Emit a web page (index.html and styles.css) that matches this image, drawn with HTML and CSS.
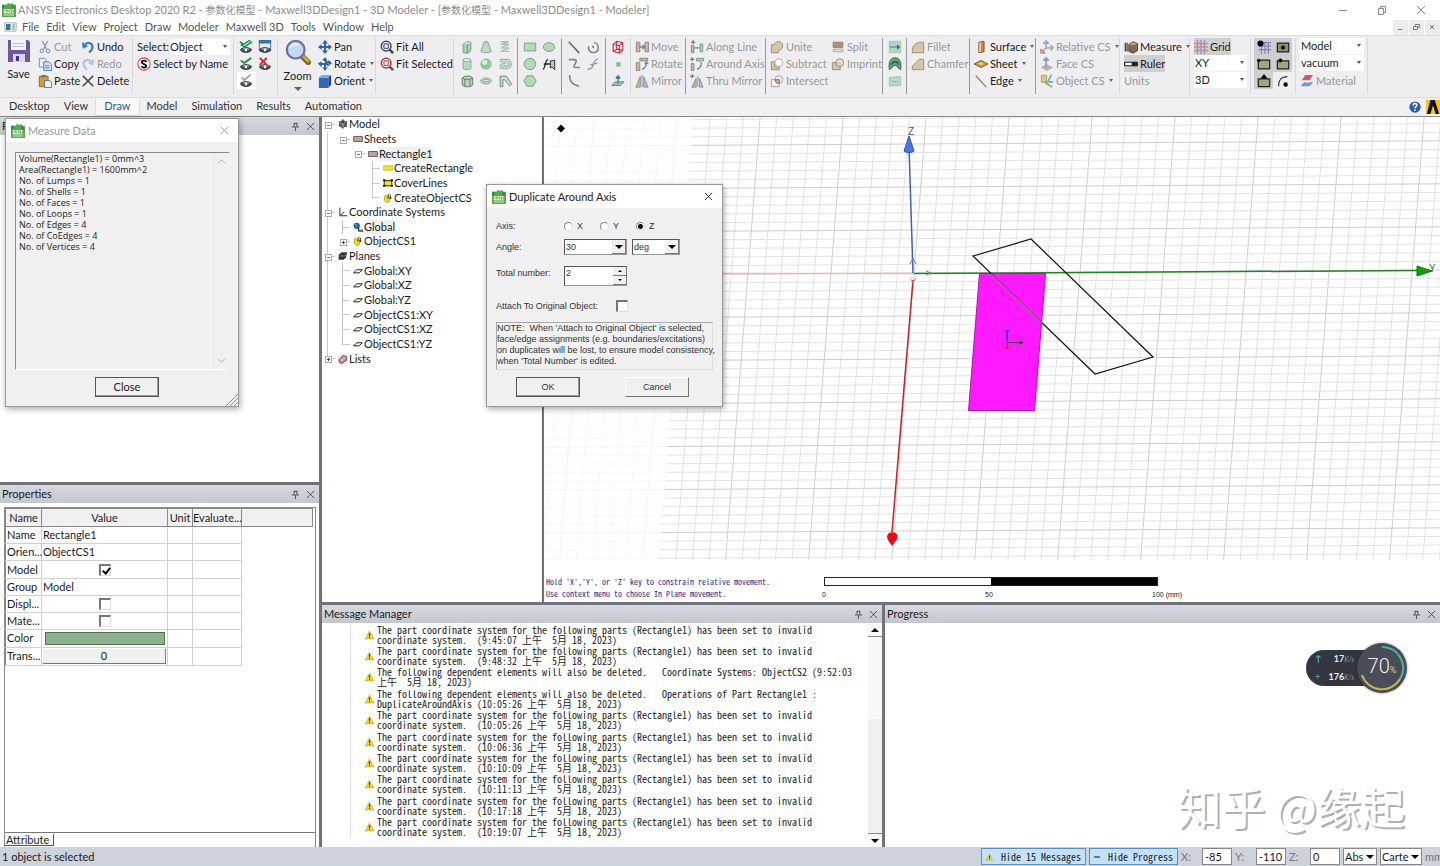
FILE: index.html
```html
<!DOCTYPE html>
<html lang="en">
<head>
  <meta charset="UTF-8">
  <title>ANSYS Electronics Desktop 2020 R2</title>
  <meta name="viewport" content="width=device-width, initial-scale=1.0">
  <link rel="stylesheet" href="styles.css">
</head>
<body>
  <!-- icon set -->
  <svg class="defs" aria-hidden="true">
    <symbol id="edt" viewBox="0 0 16 16"><path fill="#5aa552" d="M0 2h5l2-2 3 1 2-1 1 2h3v14H0z"/><path fill="#3f8a3c" d="M0 2h3v3l-3 2zM11 1l4 3v4l-3-2z"/><path fill="#8ccf7c" d="M2 11h12v4H2z"/><text x="2" y="11" class="edt-text">EDT</text></symbol>
    <symbol id="mdi" viewBox="0 0 16 16"><path fill="#fff" stroke="#8a9296" d="M.5 2.500h15v11H.5z"/><path fill="#2f7d86" d="M2 4h6v8H2z"/><path fill="#b9c4c8" d="M10 4h4v8h-4z"/></symbol>
    <symbol id="save" viewBox="0 0 24 24"><path fill="#6b58a5" d="M1 1h20l2 2v20H1z"/><path fill="#f4f3f8" d="M4 1h15v10H4z"/><path fill="#c3bedb" d="M6 4h11v1H6zM6 7h11v1H6z"/><path fill="#d8d5e6" d="M6 15h12v8H6z"/><path fill="#41347c" d="M9 17h3v5H9z"/></symbol>
    <symbol id="cut" viewBox="0 0 16 16"><path fill="none" stroke="#8fa3bd" stroke-width="1.600" d="M5 1l5 10M11 1L6 11"/><circle cx="4.500" cy="12.500" r="2" fill="none" stroke="#8fa3bd" stroke-width="1.500"/><circle cx="11.500" cy="12.500" r="2" fill="none" stroke="#8fa3bd" stroke-width="1.500"/></symbol>
    <symbol id="copy" viewBox="0 0 16 16"><path fill="#eaf2fc" stroke="#5f86bd" d="M1.500 1.500h6l2 2v8h-8z"/><path fill="#cfe0f6" stroke="#4a74b0" d="M6.500 5.500h6l3 3v7h-9z"/><path stroke="#4a74b0" d="M8 10h5M8 12.500h5"/></symbol>
    <symbol id="paste" viewBox="0 0 16 16"><path fill="#d69a3a" stroke="#8b6320" d="M1.500 2.500h10v12h-10z"/><path fill="#777" d="M4 1h5v3H4z"/><path fill="#e8f0fb" stroke="#49688f" d="M7.500 7.500h6l2 2v6h-8z"/></symbol>
    <symbol id="undo" viewBox="0 0 16 16"><path fill="none" stroke="#3f7cc4" stroke-width="2.600" d="M4 6c4-5 10-2 9 3-.5 3-2 4-4 5"/><path fill="#3f7cc4" d="M1 2l1 8 6-3z"/></symbol>
    <symbol id="redo" viewBox="0 0 16 16"><path fill="none" stroke="#b3c5dd" stroke-width="2.600" d="M12 6C8 1 2 4 3 9c.5 3 2 4 4 5"/><path fill="#b3c5dd" d="M15 2l-1 8-6-3z"/></symbol>
    <symbol id="delete" viewBox="0 0 16 16"><path fill="none" stroke="#4b4b4b" stroke-width="2" d="M2 2l12 12M14 2L2 14"/></symbol>
    <symbol id="byname" viewBox="0 0 16 16"><circle cx="8" cy="8" r="7" fill="#fff" stroke="#c9414b" stroke-width="1.200"/><path fill="none" stroke="#111" stroke-width="2.200" d="M11 5.500C9.500 3.500 5.500 3.800 5.500 6S10.600 8 10.600 10.300 6.500 12.600 5 10.600"/></symbol>
    <symbol id="eye" viewBox="0 0 16 16"><path fill="#3d4347" d="M1 11c3-4 11-4 14 0-3 5-11 5-14 0z"/><path fill="none" stroke="#c6cbcd" d="M4 11c2-2 6-2 8 0"/><circle cx="8" cy="11.500" r="1.600" fill="#fff"/></symbol>
    <symbol id="eye-tick" viewBox="0 0 16 16"><use href="#eye"/><path fill="none" stroke="#1f9a4b" stroke-width="2.200" d="M2 4l4 3 8-6"/></symbol>
    <symbol id="eye-ticks" viewBox="0 0 16 16"><use href="#eye"/><path fill="none" stroke="#1f9a4b" stroke-width="1.800" d="M1 2l4 3 8-5M2 5l4 3 9-6"/></symbol>
    <symbol id="eye-violet" viewBox="0 0 16 16"><use href="#eye"/><path fill="none" stroke="#b07fd0" stroke-width="1.800" d="M3 4l3 3 7-6"/></symbol>
    <symbol id="eye-win" viewBox="0 0 16 16"><path fill="#dfe9f5" stroke="#3f6fa8" d="M1.500.5h13v12h-13z"/><path fill="#3f6fa8" d="M1 0h14v4H1z"/><use href="#eye"/></symbol>
    <symbol id="eye-x" viewBox="0 0 16 16"><use href="#eye"/><path stroke="#d8262c" stroke-width="2.400" d="M2 1l8 8M10 1L2 9"/></symbol>
    <symbol id="zoom" viewBox="0 0 28 28"><path stroke="#7d6420" stroke-width="6" stroke-linecap="round" d="M18 18l7 7"/><path stroke="#c9a94b" stroke-width="3" stroke-linecap="round" d="M19 18l6 6"/><circle cx="11.500" cy="11.500" r="9.500" fill="#c3d8f5" stroke="#6a6f9c" stroke-width="2.400"/><path fill="#eef5fe" d="M5 10c1-5 7-7 11-3-4-1-8 0-11 3z"/></symbol>
    <symbol id="pan" viewBox="0 0 16 16"><path stroke="#2e63a8" stroke-width="2.400" d="M8 2v12M2 8h12"/><path fill="#2e63a8" d="M8 0l3.500 4h-7zM8 16l3.500-4h-7zM0 8l4-3.500v7zM16 8l-4-3.500v7z"/></symbol>
    <symbol id="rotate" viewBox="0 0 16 16"><path fill="none" stroke="#2e63a8" stroke-width="2.200" d="M9 2v4h5M1 8h9l2 2M8 14V9"/><path fill="#2e63a8" d="M5 3l4-3v6zM16 7l-4-4v7zM0 7l4-2v7zM8 16l3-4H5z"/></symbol>
    <symbol id="orient" viewBox="0 0 16 16"><path fill="#2f69b8" d="M1 4h11v12H1z"/><path fill="#79a9e2" d="M1 4l3-3h11l-3 3z"/><path fill="#1d4682" d="M12 4l3-3v11l-3 4z"/></symbol>
    <symbol id="fit" viewBox="0 0 16 16"><circle cx="7" cy="7" r="5.500" fill="#eef1fa" stroke="#3f4668" stroke-width="1.800"/><path stroke="#3f4668" stroke-width="3" d="M11 11l4 4"/><path fill="none" stroke="#333" d="M4.500 4.500h5v5h-5z"/></symbol>
    <symbol id="fitsel" viewBox="0 0 16 16"><circle cx="7" cy="7" r="5.500" fill="#fbeeee" stroke="#8f4747" stroke-width="1.800"/><path stroke="#6a5050" stroke-width="3" d="M11 11l4 4"/><path fill="none" stroke="#b52a35" d="M4.500 4.500h5v5h-5z"/></symbol>
    <symbol id="box" viewBox="0 0 16 16"><path fill="#a5d2ac" stroke="#7fa585" d="M3.500 4.500l5-3 4 1v10l-4 3-5-1z"/><path fill="#cfe8d2" d="M4 4.500l4.500-2.500 3.500 1L8 5z"/><path stroke="#6f9276" d="M8.500 5v10"/></symbol>
    <symbol id="cone" viewBox="0 0 16 16"><path fill="#c4d6cb" stroke="#8a9c90" d="M6 2h4l4 11c-3 2-9 2-12 0z"/><path fill="none" stroke="#a9b9ae" d="M6 3c1 1 3 1 4 0"/></symbol>
    <symbol id="helix" viewBox="0 0 16 16"><path fill="none" stroke="#a8c3b0" stroke-width="1.600" d="M3 2h8M11 2c2 1-6 2-7 3h8c1 1-7 2-8 4h8c1 1-7 2-8 4h9"/></symbol>
    <symbol id="cyl" viewBox="0 0 16 16"><path fill="#b5dcba" stroke="#83a98a" d="M3.500 3v10c2 2 7 2 9 0V3z"/><ellipse cx="8" cy="3.500" rx="4.500" ry="2" fill="#def0e0" stroke="#83a98a"/></symbol>
    <symbol id="sphere" viewBox="0 0 16 16"><circle cx="8" cy="8" r="6.500" fill="#93c49a"/><circle cx="6.500" cy="6" r="3" fill="#d5edd8"/></symbol>
    <symbol id="spiral" viewBox="0 0 16 16"><path fill="none" stroke="#8fa898" stroke-width="4" d="M2 4h8c5 0 5 8 0 8H6c-3 0-3-3 0-3h3"/><path fill="none" stroke="#c7e2cc" stroke-width="2" d="M2 4h8c5 0 5 8 0 8H6c-3 0-3-3 0-3h3"/></symbol>
    <symbol id="prism" viewBox="0 0 16 16"><path fill="#b5d6ba" stroke="#5f6f64" d="M2.500 4.500l3-2h6l3 2v8l-3 2h-6l-3-2z"/><path fill="none" stroke="#5f6f64" d="M2.500 4.500l3 1.500h6l3-1.500M5.500 6v8M11.500 6v8"/></symbol>
    <symbol id="torus" viewBox="0 0 16 16"><ellipse cx="8" cy="8" rx="6" ry="3.500" fill="#b9cdbf" stroke="#91a597"/><ellipse cx="8" cy="7.500" rx="3" ry="1.200" fill="#eef3ef" stroke="#91a597"/></symbol>
    <symbol id="bend" viewBox="0 0 16 16"><path fill="#cfe0d3" stroke="#66766b" d="M2.500 14.500v-12h7l6 9-2 2-6-7h-2v8z"/></symbol>
    <symbol id="rect" viewBox="0 0 16 16"><path fill="#b2dab8" stroke="#769a7c" d="M1.500 3.500h13v9h-13z"/></symbol>
    <symbol id="ellipse" viewBox="0 0 16 16"><ellipse cx="8" cy="8" rx="6.500" ry="5" fill="#b2dab8" stroke="#769a7c"/></symbol>
    <symbol id="circle" viewBox="0 0 16 16"><circle cx="8" cy="8" r="6.500" fill="#b2dab8" stroke="#769a7c"/></symbol>
    <symbol id="polygon" viewBox="0 0 16 16"><path fill="#b2dab8" stroke="#769a7c" d="M4.500 2h7L15 8l-3.500 6h-7L1 8z"/></symbol>
    <symbol id="eqn" viewBox="0 0 16 16"><path fill="#a9d2af" stroke="#222" d="M9.500 4.500l5-1v11l-3-3-2 1z"/><path fill="none" stroke="#222" stroke-width="1.500" d="M1 14c3 0 2-11 6-11M2 8h7"/></symbol>
    <symbol id="line" viewBox="0 0 16 16"><path stroke="#666b6e" stroke-width="1.800" d="M2 2l12 13"/></symbol>
    <symbol id="arc" viewBox="0 0 16 16"><path fill="none" stroke="#7d8386" stroke-width="1.700" d="M3 7c-2 9 11 10 11 2 0-4-2-6-5-6"/><circle cx="8" cy="8" r="1.300" fill="#7d8386"/></symbol>
    <symbol id="spline" viewBox="0 0 16 16"><path fill="none" stroke="#7d8386" stroke-width="1.800" d="M2 3h7c5 1-4 8 0 9h6"/></symbol>
    <symbol id="curve" viewBox="0 0 16 16"><path fill="none" stroke="#8d9396" stroke-width="1.500" d="M2 14c9 0 3-9 12-12M5 9l8-2"/></symbol>
    <symbol id="arc3" viewBox="0 0 16 16"><path fill="none" stroke="#7d8386" stroke-width="1.700" d="M3 1c0 8 3 11 11 13"/></symbol>
    <symbol id="redbox" viewBox="0 0 16 16"><path fill="#fdf0f0" stroke="#c9303a" stroke-width="1.300" d="M2.500 5l4-3.500 7 1.500v8.500L10 15l-7.500-2zM2.500 5l7 1.500L13.500 3M9.500 6.500V15M6.500 1.500v9l-4 2.500M6.500 10.500l7 1"/></symbol>
    <symbol id="point" viewBox="0 0 16 16"><path fill="#7cc286" d="M6 6h5v5H6z"/></symbol>
    <symbol id="plane" viewBox="0 0 16 16"><path fill="#a9c9af" stroke="#5d7363" d="M1 13l4-4h10l-4 4z"/><path stroke="#4a6fd0" stroke-width="1.500" d="M8 11V2M5.500 5L8 2l2.500 3"/></symbol>
    <symbol id="move" viewBox="0 0 16 16"><path fill="#c9b79a" stroke="#8a8276" d="M1.500 2.500h4v11h-4zM11.500 2.500h4v11h-4z"/><path stroke="#5f7fd0" stroke-width="1.500" d="M5 8h6M9 5.500L11 8 9 10.500"/></symbol>
    <symbol id="rot" viewBox="0 0 16 16"><path fill="#c9b79a" stroke="#8a8276" d="M1.500 6.500h4v9h-4zM5.500 1.500h9v3h-9z"/><path fill="none" stroke="#5f7fd0" stroke-width="1.500" d="M8 14c4-1 5-4 5-8M11 8l2-2 2 2"/></symbol>
    <symbol id="mirror" viewBox="0 0 16 16"><path fill="#c9b79a" stroke="#8a8276" d="M6 3v12H1z"/><path fill="#b7b9cd" stroke="#8a8ba6" d="M10 3v12h5z"/><path stroke="#7b82b8" d="M8 1v14"/></symbol>
    <symbol id="dupline" viewBox="0 0 16 16"><path fill="#c9b79a" stroke="#8a8276" d="M1.500 6.500h3v8h-3z"/><path fill="#a9d2af" stroke="#769a7c" d="M11.500 4.500h3v9h-3z"/><path stroke="#5f7fd0" stroke-width="1.500" d="M5 9h6"/><path stroke="#555" d="M1 2.500h5M3.500 0v5"/></symbol>
    <symbol id="duprot" viewBox="0 0 16 16"><path fill="#c9b79a" stroke="#8a8276" d="M1.500 7.500h3v8h-3z"/><path fill="#a9d2af" stroke="#769a7c" d="M7.500 1.500h8v3h-8z"/><path fill="none" stroke="#5f7fd0" stroke-width="1.500" d="M8 14c4-1 5-4 5-8"/><path stroke="#555" d="M0 2.500h5M2.500 0v5"/></symbol>
    <symbol id="dupmir" viewBox="0 0 16 16"><path fill="#c9b79a" stroke="#8a8276" d="M7 5v10H2z"/><path fill="#a9c9cd" stroke="#8a8ba6" d="M11 5v10h4z"/><path stroke="#7b82b8" d="M9 2v13"/><path stroke="#555" d="M0 2.500h5M2.500 0v5"/></symbol>
    <symbol id="unite" viewBox="0 0 16 16"><path fill="#d8c5a6" stroke="#93866f" d="M1.500 14.500v-9h3c1-5 10-5 10 1 0 3-2 5-4 5l-1 3z"/></symbol>
    <symbol id="subtract" viewBox="0 0 16 16"><path fill="#d8c5a6" stroke="#93866f" d="M1.500 14.500v-9h4v6h5v3z"/><circle cx="10" cy="6.500" r="4.500" fill="#fafafa" stroke="#aaa"/></symbol>
    <symbol id="intersect" viewBox="0 0 16 16"><path fill="#f4f4f4" stroke="#999" d="M1.500 6.500h9v8h-9z"/><circle cx="10" cy="6.500" r="4.500" fill="none" stroke="#999"/><path fill="#d8a58c" stroke="#a5694d" d="M6 6.500h4.500v4C8 11 6 9 6 6.500z"/></symbol>
    <symbol id="split" viewBox="0 0 16 16"><path fill="#b08f78" stroke="#8c8172" d="M2.500 2.500h11v6h-11z"/><path fill="#e6ded4" stroke="#aaa093" d="M2.500 10.500h11v3h-11z"/></symbol>
    <symbol id="imprint" viewBox="0 0 16 16"><path fill="#d8c5a6" stroke="#93866f" d="M1.500 6.500h9v8h-9z"/><circle cx="10" cy="6.500" r="4.500" fill="#e4d9c8" fill-opacity=".7" stroke="#93866f"/></symbol>
    <symbol id="sheet1" viewBox="0 0 16 16"><path fill="#a9d7cf" stroke="#b5c66a" d="M1.500 1.500h13v13h-13z"/><path stroke="#3f72d8" stroke-width="1.300" d="M2 8h11M10.500 5.500L13 8l-2.500 2.500"/></symbol>
    <symbol id="sheet2" viewBox="0 0 16 16"><path fill="#62aa6e" stroke="#2c5e3a" d="M1.500 14.500C0 2 5 1 8 1s8 1 6.500 13.500L11 12c0-3-6-3-6 0z"/><path fill="none" stroke="#1c3fae" stroke-width="1.500" d="M4 9c1-5 7-5 8 0"/></symbol>
    <symbol id="sheet3" viewBox="0 0 16 16"><path fill="#b1dcd2" stroke="#a8bfa0" d="M1.500 3.500c4 2 8-2 13 0v10c-5-2-9 2-13 0z"/><path stroke="#79a9b5" d="M4 8l8 1"/></symbol>
    <symbol id="fillet" viewBox="0 0 16 16"><path fill="#d8c5a6" stroke="#93866f" d="M1.500 14.500C1 6 5 2 14.500 2.500v12z"/></symbol>
    <symbol id="chamfer" viewBox="0 0 16 16"><path fill="#d8c5a6" stroke="#93866f" d="M1.500 14.500v-4l8-8h5v12z"/></symbol>
    <symbol id="surface" viewBox="0 0 16 16"><path fill="#c58b4c" stroke="#7b4f22" d="M5.500 2.500l6-1v12l-6 1z"/><path fill="#efd09a" d="M6 3l2-.5v11L6 14z"/></symbol>
    <symbol id="sheet" viewBox="0 0 16 16"><path fill="#caa04a" stroke="#6e5215" d="M0 8l8-4 8 4-8 4z"/><path fill="#f3dda0" d="M5 7.500l3-1.500 3 2-3 1z"/></symbol>
    <symbol id="edge" viewBox="0 0 16 16"><path stroke="#a87f5b" stroke-width="1.600" d="M2 2l12 13"/></symbol>
    <symbol id="cs" viewBox="0 0 16 16"><path fill="none" stroke="#8fb99a" stroke-width="2" d="M7 9h8M12 6l3 3-3 3"/><path stroke="#8fb2cf" stroke-width="2" d="M7 10V1M4 4l3-3 3 3"/><path stroke="#d6a1a1" stroke-width="2" d="M7 9l-5 5M1 10v5h5"/></symbol>
    <symbol id="facecs" viewBox="0 0 16 16"><path fill="#c9a9a2" d="M1 12l6-4 8 4-7 4z"/><path stroke="#7fa9c9" stroke-width="2" d="M7 11V1M4 4l3-3 3 3"/></symbol>
    <symbol id="objcs" viewBox="0 0 16 16"><path fill="#d8c878" stroke="#9aa060" d="M1.500 1.500h6v8h-6z"/><path stroke="#79b58a" stroke-width="2" d="M6 9h9M6 10l8 5"/><path stroke="#7fa9c9" stroke-width="2" d="M9 9l4-8"/></symbol>
    <symbol id="measure" viewBox="0 0 16 16"><path fill="#8b6a4a" stroke="#4b3623" d="M5.500 5l5-3 5 2v8l-5 3-5-2z"/><path fill="#c9a67d" d="M6 5l5-2.500L15 4l-4.500 2z"/><path stroke="#444" stroke-width="1.500" d="M1.500 3v10M3.500 3v10"/></symbol>
    <symbol id="ruler" viewBox="0 0 20 16"><path fill="#fff" stroke="#222" stroke-width="1.600" d="M1 5.500h18v5H1z"/><path fill="#222" d="M11 5h8v6h-8z"/></symbol>
    <symbol id="grid" viewBox="0 0 16 16"><path stroke="#8d93c4" stroke-width="1.500" d="M4 0v16M8 0v16M12 0v16"/><path stroke="#c78a93" stroke-width="1.500" d="M0 4h16M0 8h16M0 12h16"/></symbol>
    <symbol id="snapgrid" viewBox="0 0 16 16"><path stroke="#7d83b8" stroke-width="1.300" d="M5 4v12M9 2v14M13 2v14M2 7h14M2 11h14M7 3h9"/><circle cx="4" cy="4" r="3.500" fill="#000"/></symbol>
    <symbol id="snapc" viewBox="0 0 16 16"><path fill="#8d8f6b" stroke="#222" stroke-width="1.400" d="M1.500 3.500h13v10h-13z"/><circle cx="8" cy="8.500" r="2.300"/></symbol>
    <symbol id="snapv" viewBox="0 0 16 16"><path fill="#a3a57d" stroke="#222" stroke-width="1.400" d="M1.500 3.500h13v10h-13z"/><circle cx="2" cy="4" r="2"/></symbol>
    <symbol id="snape" viewBox="0 0 16 16"><path fill="#a3a57d" stroke="#222" stroke-width="1.400" d="M1.500 4.500h13v9h-13z"/><circle cx="5" cy="4" r="2.300"/></symbol>
    <symbol id="snapm" viewBox="0 0 16 16"><path fill="#a3a57d" stroke="#222" stroke-width="1.400" d="M1.500 5.500h13v9h-13z"/><path d="M8 0l4 5H4z"/></symbol>
    <symbol id="snapq" viewBox="0 0 16 16"><path fill="none" stroke="#222" stroke-width="1.300" d="M3 14C3 5 7 3 13 3"/><circle cx="11" cy="12" r="2.500"/></symbol>
    <symbol id="material" viewBox="0 0 16 16"><path fill="#7a93d6" d="M1 13l4-4h10l-4 5H2z"/><path fill="#efeff5" d="M2 9l4-3h9l-4 4z"/><path fill="#cf5a66" d="M2 7l4-6h9l-4 6z"/></symbol>
    <symbol id="help" viewBox="0 0 16 16"><circle cx="8" cy="8" r="7.500" fill="#2c5fa5"/><path fill="none" stroke="#fff" stroke-width="2" d="M5.500 6c0-4 5.500-3 5 0-.2 1.500-2.500 1.800-2.500 3.500M8 11v2"/></symbol>
    <symbol id="ansys" viewBox="0 0 16 16"><path fill="#f6c21c" d="M0 0h16v16H0z"/><path fill="#111" d="M5 0h5l5 16h-4L8 6 5 16H1z"/></symbol>
    <symbol id="warn" viewBox="0 0 16 16"><path fill="#f2dc22" stroke="#a89a10" d="M8 1l7.500 14H.5z"/><path stroke="#222" stroke-width="2" d="M8 5v5M8 11.500v2"/></symbol>
    <symbol id="pin" viewBox="0 0 10 10"><path fill="none" stroke="#444" d="M3.500 1v4M6.500 1v4M3 1.500h4M1 5.500h8M5 6v4"/></symbol>
    <symbol id="x" viewBox="0 0 10 10"><path fill="none" stroke="currentColor" d="M1 1l8 8M9 1L1 9"/></symbol>
    <symbol id="t-model" viewBox="0 0 16 16"><path fill="#555" d="M8 0l3 3 4 1-1 5 1 3-5 1-2 3-3-3-4-2 1-4-1-3 4-1z"/><path stroke="#eee" d="M4 6l4 2 4-3M8 8v5"/></symbol>
    <symbol id="t-sheet" viewBox="0 0 16 16"><path fill="#bda3a5" stroke="#6f5557" stroke-width="1.500" d="M1 4h14v8H1z"/></symbol>
    <symbol id="t-create" viewBox="0 0 16 16"><path fill="#f3e70d" stroke="#b5a600" d="M1 4.500h14v7H1z"/></symbol>
    <symbol id="t-cover" viewBox="0 0 16 16"><path fill="#f3e70d" stroke="#5a4a18" stroke-width="2" d="M2 4h12v8H2z"/><path fill="#222" d="M0 2h4v3H0zM12 2h4v3h-4zM0 11h4v3H0zM12 11h4v3h-4z"/></symbol>
    <symbol id="t-objcs" viewBox="0 0 16 16"><path fill="#f0e016" stroke="#8f8410" d="M2 5l4-2 5 3-1 8-5 1-3-3z"/><path stroke="#444" stroke-width="1.500" d="M7 8l7 0M7 8l3-7M12 3v7"/></symbol>
    <symbol id="t-cs" viewBox="0 0 16 16"><path fill="none" stroke="#333" stroke-width="1.600" d="M3 1v13h12M3 14l7-6"/></symbol>
    <symbol id="t-global" viewBox="0 0 16 16"><circle cx="6" cy="6" r="5" fill="#1f5fb8"/><path fill="#5cc26a" d="M3 3l4 1-2 3z"/><path fill="none" stroke="#222" stroke-width="2" d="M9 9v5h6"/><path fill="#d33" d="M12 12h4v4h-4z"/></symbol>
    <symbol id="t-planes" viewBox="0 0 16 16"><path fill="#333" d="M1 6l5-4h9l-2 8-4 4H1z"/><path fill="none" stroke="#bbb" d="M3 8h8l3-4"/></symbol>
    <symbol id="t-plane" viewBox="0 0 16 16"><path fill="#fff" stroke="#222" stroke-width="1.600" d="M1 11l5-5h9l-5 5z"/></symbol>
    <symbol id="t-lists" viewBox="0 0 16 16"><path fill="#c67a80" stroke="#6d2c31" d="M1 9l7-7 6 2v6l-7 5-5-1z"/><path stroke="#fff" d="M4 10l7-5M5 12l7-5"/></symbol>
  </svg>

  <header class="titlebar">
    <svg class="ico"><use href="#edt"/></svg>
    <h1>ANSYS Electronics Desktop 2020 R2 - <span lang="zh">参数化模型</span> - Maxwell3DDesign1 - 3D Modeler - [<span lang="zh">参数化模型</span> - Maxwell3DDesign1 - Modeler]</h1>
    <div class="win-buttons">
      <button aria-label="Minimize"><svg viewBox="0 0 10 10"><path d="M1 5.500h8"/></svg></button>
      <button aria-label="Restore"><svg viewBox="0 0 10 10"><path d="M1.500 3.500h5v6h-5zM3.500 3V1.500h5v6H7"/></svg></button>
      <button aria-label="Close window"><svg viewBox="0 0 10 10"><path d="M1 1l8 8M9 1L1 9"/></svg></button>
    </div>
  </header>

  <nav class="menubar">
    <svg class="mdi-ico"><use href="#mdi"/></svg>
    <a href="#">File</a><a href="#">Edit</a><a href="#">View</a><a href="#">Project</a><a href="#">Draw</a><a href="#">Modeler</a><a href="#">Maxwell 3D</a><a href="#">Tools</a><a href="#">Window</a><a href="#">Help</a>
    <div class="mdi-buttons">
      <button aria-label="Minimize document"><svg viewBox="0 0 10 10"><path d="M3 7.500h4"/></svg></button>
      <button aria-label="Restore document"><svg viewBox="0 0 10 10"><path d="M2.500 4.500h4v3h-4zM4.500 4V2.500h4v3H7"/></svg></button>
      <button aria-label="Close document"><svg viewBox="0 0 10 10"><path d="M3 3l4 4M7 3L3 7"/></svg></button>
    </div>
  </nav>

  <section class="ribbon">
    <div class="big"><button><svg class="save-ico"><use href="#save"/></svg>Save</button></div>
    <div class="col">
      <button class="off"><svg class="ico"><use href="#cut"/></svg>Cut</button>
      <button><svg class="ico"><use href="#copy"/></svg>Copy</button>
      <button><svg class="ico"><use href="#paste"/></svg>Paste</button>
    </div>
    <div class="col end">
      <button><svg class="ico"><use href="#undo"/></svg>Undo</button>
      <button class="off"><svg class="ico"><use href="#redo"/></svg>Redo</button>
      <button><svg class="ico"><use href="#delete"/></svg>Delete</button>
    </div>
    <div class="col end">
      <div class="row"><label for="select-mode">Select:</label><span class="sel grow"><select id="select-mode"><option>Object</option></select></span></div>
      <button><svg class="ico"><use href="#byname"/></svg>Select by Name</button>
    </div>
    <div class="icons two end">
      <button aria-label="Show selection in all views"><svg class="ico"><use href="#eye-ticks"/></svg></button>
      <button aria-label="Visibility dialog"><svg class="ico"><use href="#eye-win"/></svg></button>
      <button aria-label="Show selection"><svg class="ico"><use href="#eye-tick"/></svg></button>
      <button aria-label="Hide selection"><svg class="ico"><use href="#eye-x"/></svg></button>
      <button aria-label="Show only selection" class="lit"><svg class="ico"><use href="#eye-violet"/></svg></button>
    </div>
    <div class="big"><button><svg class="zoom-ico"><use href="#zoom"/></svg>Zoom<i class="arrow wide"></i></button></div>
    <div class="col end">
      <button><svg class="ico"><use href="#pan"/></svg>Pan</button>
      <button><svg class="ico"><use href="#rotate"/></svg>Rotate<i class="arrow"></i></button>
      <button><svg class="ico"><use href="#orient"/></svg>Orient<i class="arrow"></i></button>
    </div>
    <div class="col end">
      <button><svg class="ico"><use href="#fit"/></svg>Fit All</button>
      <button><svg class="ico"><use href="#fitsel"/></svg>Fit Selected</button>
    </div>
    <div class="icons three dark">
      <button aria-label="Box"><svg class="ico"><use href="#box"/></svg></button>
      <button aria-label="Cone"><svg class="ico"><use href="#cone"/></svg></button>
      <button aria-label="Helix"><svg class="ico"><use href="#helix"/></svg></button>
      <button aria-label="Cylinder"><svg class="ico"><use href="#cyl"/></svg></button>
      <button aria-label="Sphere"><svg class="ico"><use href="#sphere"/></svg></button>
      <button aria-label="Spiral"><svg class="ico"><use href="#spiral"/></svg></button>
      <button aria-label="Regular polyhedron"><svg class="ico"><use href="#prism"/></svg></button>
      <button aria-label="Torus"><svg class="ico"><use href="#torus"/></svg></button>
      <button aria-label="Bondwire"><svg class="ico"><use href="#bend"/></svg></button>
    </div>
    <div class="icons two dark">
      <button aria-label="Rectangle"><svg class="ico"><use href="#rect"/></svg></button>
      <button aria-label="Ellipse"><svg class="ico"><use href="#ellipse"/></svg></button>
      <button aria-label="Circle"><svg class="ico"><use href="#circle"/></svg></button>
      <button aria-label="Equation surface"><svg class="ico"><use href="#eqn"/></svg></button>
      <button aria-label="Regular polygon"><svg class="ico"><use href="#polygon"/></svg></button>
    </div>
    <div class="icons two dark">
      <button aria-label="Line"><svg class="ico"><use href="#line"/></svg></button>
      <button aria-label="Center arc"><svg class="ico"><use href="#arc"/></svg></button>
      <button aria-label="Spline"><svg class="ico"><use href="#spline"/></svg></button>
      <button aria-label="Equation curve"><svg class="ico"><use href="#curve"/></svg></button>
      <button aria-label="3 point arc"><svg class="ico"><use href="#arc3"/></svg></button>
    </div>
    <div class="icons one end">
      <button aria-label="Region"><svg class="ico"><use href="#redbox"/></svg></button>
      <button aria-label="Point"><svg class="ico"><use href="#point"/></svg></button>
      <button aria-label="Plane"><svg class="ico"><use href="#plane"/></svg></button>
    </div>
    <div class="col off dark">
      <button><svg class="ico"><use href="#move"/></svg>Move</button>
      <button><svg class="ico"><use href="#rot"/></svg>Rotate</button>
      <button><svg class="ico"><use href="#mirror"/></svg>Mirror</button>
    </div>
    <div class="col off dark">
      <button><svg class="ico"><use href="#dupline"/></svg>Along Line</button>
      <button><svg class="ico"><use href="#duprot"/></svg>Around Axis</button>
      <button><svg class="ico"><use href="#dupmir"/></svg>Thru Mirror</button>
    </div>
    <div class="col off">
      <button><svg class="ico"><use href="#unite"/></svg>Unite</button>
      <button><svg class="ico"><use href="#subtract"/></svg>Subtract</button>
      <button><svg class="ico"><use href="#intersect"/></svg>Intersect</button>
    </div>
    <div class="col off dark">
      <button><svg class="ico"><use href="#split"/></svg>Split</button>
      <button><svg class="ico"><use href="#imprint"/></svg>Imprint</button>
    </div>
    <div class="icons one dark">
      <button aria-label="Sweep along vector"><svg class="ico"><use href="#sheet1"/></svg></button>
      <button aria-label="Sweep around axis"><svg class="ico"><use href="#sheet2"/></svg></button>
      <button aria-label="Sweep along path"><svg class="ico"><use href="#sheet3"/></svg></button>
    </div>
    <div class="col off dark">
      <button><svg class="ico"><use href="#fillet"/></svg>Fillet</button>
      <button><svg class="ico"><use href="#chamfer"/></svg>Chamfer</button>
    </div>
    <div class="col dark">
      <button><svg class="ico"><use href="#surface"/></svg>Surface<i class="arrow"></i></button>
      <button><svg class="ico"><use href="#sheet"/></svg>Sheet<i class="arrow"></i></button>
      <button><svg class="ico"><use href="#edge"/></svg>Edge<i class="arrow"></i></button>
    </div>
    <div class="col off end">
      <button><svg class="ico"><use href="#cs"/></svg>Relative CS<i class="arrow"></i></button>
      <button><svg class="ico"><use href="#facecs"/></svg>Face CS</button>
      <button><svg class="ico"><use href="#objcs"/></svg>Object CS<i class="arrow"></i></button>
    </div>
    <div class="col end">
      <button><svg class="ico"><use href="#measure"/></svg>Measure<i class="arrow"></i></button>
      <button class="pressed"><svg class="ico"><use href="#ruler"/></svg>Ruler</button>
      <button class="off">Units</button>
    </div>
    <div class="col end">
      <button class="pressed"><svg class="ico"><use href="#grid"/></svg>Grid</button>
      <span class="sel"><select aria-label="Drawing plane"><option>XY</option></select></span>
      <span class="sel"><select aria-label="Movement mode"><option>3D</option></select></span>
    </div>
    <div class="icons two end">
      <button aria-label="Snap to grid" class="pressed"><svg class="ico"><use href="#snapgrid"/></svg></button>
      <button aria-label="Snap to face center" class="pressed"><svg class="ico"><use href="#snapc"/></svg></button>
      <button aria-label="Snap to vertex" class="pressed"><svg class="ico"><use href="#snapv"/></svg></button>
      <button aria-label="Snap to edge" class="pressed"><svg class="ico"><use href="#snape"/></svg></button>
      <button aria-label="Snap to edge center" class="pressed"><svg class="ico"><use href="#snapm"/></svg></button>
      <button aria-label="Snap to arc center"><svg class="ico"><use href="#snapq"/></svg></button>
    </div>
    <div class="col end">
      <span class="sel"><select aria-label="Model type"><option>Model</option></select></span>
      <span class="sel"><select aria-label="Material name"><option>vacuum</option></select></span>
      <button class="off"><svg class="ico"><use href="#material"/></svg>Material</button>
    </div>
  </section>

  <nav class="tabs">
    <a href="#">Desktop</a><a href="#">View</a><a href="#" class="active">Draw</a><a href="#">Model</a><a href="#">Simulation</a><a href="#">Results</a><a href="#">Automation</a>
    <div class="tabs-right">
      <button aria-label="Help"><svg class="small-ico"><use href="#help"/></svg></button>
      <button aria-label="ANSYS"><svg class="ico"><use href="#ansys"/></svg></button>
    </div>
  </nav>

  <main class="workspace">
    <aside class="side">
      <section class="panel project">
        <div class="panel-head"><h2>Project Manager</h2><button aria-label="Pin project manager"><svg><use href="#pin"/></svg></button><button aria-label="Close project manager"><svg><use href="#x"/></svg></button></div>
      </section>
      <section class="panel properties">
        <div class="panel-head"><h2>Properties</h2><button aria-label="Pin properties"><svg><use href="#pin"/></svg></button><button aria-label="Close properties"><svg><use href="#x"/></svg></button></div>
        <div class="prop-body">
          <table>
            <colgroup><col class="c-name"><col class="c-value"><col class="c-unit"><col class="c-eval"><col></colgroup>
            <thead><tr><th>Name</th><th>Value</th><th>Unit</th><th>Evaluate...</th><th></th></tr></thead>
            <tbody>
              <tr><td>Name</td><td>Rectangle1</td><td></td><td></td></tr>
              <tr><td>Orien...</td><td>ObjectCS1</td><td></td><td></td></tr>
              <tr><td>Model</td><td class="mid"><input type="checkbox" aria-label="Model" checked></td><td></td><td></td></tr>
              <tr><td>Group</td><td>Model</td><td></td><td></td></tr>
              <tr><td>Displ...</td><td class="mid"><input type="checkbox" aria-label="Display wireframe"></td><td></td><td></td></tr>
              <tr><td>Mate...</td><td class="mid"><input type="checkbox" aria-label="Material appearance"></td><td></td><td></td></tr>
              <tr><td>Color</td><td class="mid"><button class="swatch" aria-label="Color"></button></td><td></td><td></td></tr>
              <tr><td>Trans...</td><td class="mid"><button class="trans">0</button></td><td></td><td></td></tr>
            </tbody>
          </table>
          <div class="attr-bar"><button>Attribute</button></div>
        </div>
      </section>
    </aside>

    <div class="center">
      <div class="upper">
        <ul class="tree">
          <li><i class="g open"></i><svg><use href="#t-model"/></svg><span>Model</span></li>
          <li><i class="g v"></i><i class="g open"></i><svg><use href="#t-sheet"/></svg><span>Sheets</span></li>
          <li><i class="g v"></i><i class="g"></i><i class="g open"></i><svg><use href="#t-sheet"/></svg><span class="hl">Rectangle1</span></li>
          <li><i class="g v"></i><i class="g"></i><i class="g"></i><i class="g v b"></i><svg><use href="#t-create"/></svg><span>CreateRectangle</span></li>
          <li><i class="g v"></i><i class="g"></i><i class="g"></i><i class="g v b"></i><svg><use href="#t-cover"/></svg><span>CoverLines</span></li>
          <li><i class="g v"></i><i class="g"></i><i class="g"></i><i class="g l b"></i><svg><use href="#t-objcs"/></svg><span>CreateObjectCS</span></li>
          <li><i class="g v open"></i><svg><use href="#t-cs"/></svg><span>Coordinate Systems</span></li>
          <li><i class="g v"></i><i class="g v b"></i><svg><use href="#t-global"/></svg><span class="hl">Global</span></li>
          <li><i class="g v"></i><i class="g shut"></i><svg><use href="#t-objcs"/></svg><span>ObjectCS1</span></li>
          <li><i class="g v open"></i><svg><use href="#t-planes"/></svg><span>Planes</span></li>
          <li><i class="g v"></i><i class="g v b"></i><svg><use href="#t-plane"/></svg><span>Global:XY</span></li>
          <li><i class="g v"></i><i class="g v b"></i><svg><use href="#t-plane"/></svg><span>Global:XZ</span></li>
          <li><i class="g v"></i><i class="g v b"></i><svg><use href="#t-plane"/></svg><span>Global:YZ</span></li>
          <li><i class="g v"></i><i class="g v b"></i><svg><use href="#t-plane"/></svg><span>ObjectCS1:XY</span></li>
          <li><i class="g v"></i><i class="g v b"></i><svg><use href="#t-plane"/></svg><span>ObjectCS1:XZ</span></li>
          <li><i class="g v"></i><i class="g l b"></i><svg><use href="#t-plane"/></svg><span>ObjectCS1:YZ</span></li>
          <li><i class="g l shut"></i><svg><use href="#t-lists"/></svg><span>Lists</span></li>
        </ul>

        <div class="view">
          <svg class="scene">
            <g id="grid-lines"></g>
            <path d="M17 7.500l4 4-4 4-4-4z"/>
            <!-- global axes -->
            <path stroke="#f0b4b4" stroke-width="1.500" d="M0 156.500h370"/>
            <path stroke="#3d5fc4" stroke-width="1.500" d="M365 30l4 126"/>
            <path fill="#4a74ea" stroke="#2f52c0" d="M365 19l5 15c-2 2-8 2-10 0z"/>
            <path fill="none" stroke="#6a6fc0" d="M366 147l3-6 3 6"/>
            <path stroke="#1a8a1a" stroke-width="1.500" d="M370 156.500l504-3"/>
            <path fill="#0ca30c" stroke="#087808" d="M873 149l15 5-15 5z"/>
            <path fill="none" stroke="#4c9a4c" d="M382 154l5 2-5 2"/>
            <path stroke="#c8202a" stroke-width="1.500" d="M369 163l-21 252"/>
            <path fill="none" stroke="#d88" d="M366 161l3 5 3-5"/>
            <path fill="#f00612" d="M348 429l-4-6c-5-10 13-10 9-1zM348 422l5 7"/>
            <text x="364" y="18" class="axis z">Z</text>
            <text x="885" y="155" class="axis y">Y</text>
            <!-- selected sheet and its rotated copy -->
            <path fill="#ff19ff" stroke="#b011b0" d="M435.500 156.500h66l-11 137h-66z"/>
            <path fill="none" stroke="#111" stroke-width="1.200" d="M429 139l58-17 122 118-58 17z"/>
            <path stroke="#a56f9b" stroke-width="1.500" d="M447 157l51 49"/>
            <path stroke="#2a2ae0" stroke-width="1.500" d="M463 224v-11M461 214h4"/>
            <path stroke="#e0203a" stroke-width="1.500" d="M463 226v6M461 231h4"/>
            <path stroke="#444" d="M463 225.500h16M476 223.500l3 2-3 2"/>
          </svg>
          <div class="hints"><p>Hold 'X','Y', or 'Z' key to constrain relative movement.</p><p>Use context menu to choose In Plane movement.</p></div>
          <div class="scale">
            <div class="scale-bar"></div>
            <div class="scale-labels"><span>0</span><span>50</span><span>100 (mm)</span></div>
          </div>
        </div>
      </div>

      <div class="lower">
        <section class="panel messages">
          <div class="panel-head"><h2>Message Manager</h2><button aria-label="Pin messages"><svg><use href="#pin"/></svg></button><button aria-label="Close messages"><svg><use href="#x"/></svg></button></div>
          <div class="msg-body">
            <ul class="msg-list">
              <li><svg><use href="#warn"/></svg><p>The part coordinate system for the following parts (Rectangle1) has been set to invalid<br>coordinate system.&nbsp; (9:45:07 上午&nbsp; 5月 18, 2023)</p></li>
              <li><svg><use href="#warn"/></svg><p>The part coordinate system for the following parts (Rectangle1) has been set to invalid<br>coordinate system.&nbsp; (9:48:32 上午&nbsp; 5月 18, 2023)</p></li>
              <li><svg><use href="#warn"/></svg><p>The following dependent elements will also be deleted.&nbsp;&nbsp; Coordinate Systems: ObjectCS2 (9:52:03<br>上午&nbsp; 5月 18, 2023)</p></li>
              <li><svg><use href="#warn"/></svg><p>The following dependent elements will also be deleted.&nbsp;&nbsp; Operations of Part Rectangle1 :<br>DuplicateAroundAxis (10:05:26 上午&nbsp; 5月 18, 2023)</p></li>
              <li><svg><use href="#warn"/></svg><p>The part coordinate system for the following parts (Rectangle1) has been set to invalid<br>coordinate system.&nbsp; (10:05:26 上午&nbsp; 5月 18, 2023)</p></li>
              <li><svg><use href="#warn"/></svg><p>The part coordinate system for the following parts (Rectangle1) has been set to invalid<br>coordinate system.&nbsp; (10:06:36 上午&nbsp; 5月 18, 2023)</p></li>
              <li><svg><use href="#warn"/></svg><p>The part coordinate system for the following parts (Rectangle1) has been set to invalid<br>coordinate system.&nbsp; (10:10:09 上午&nbsp; 5月 18, 2023)</p></li>
              <li><svg><use href="#warn"/></svg><p>The part coordinate system for the following parts (Rectangle1) has been set to invalid<br>coordinate system.&nbsp; (10:11:13 上午&nbsp; 5月 18, 2023)</p></li>
              <li><svg><use href="#warn"/></svg><p>The part coordinate system for the following parts (Rectangle1) has been set to invalid<br>coordinate system.&nbsp; (10:17:18 上午&nbsp; 5月 18, 2023)</p></li>
              <li><svg><use href="#warn"/></svg><p>The part coordinate system for the following parts (Rectangle1) has been set to invalid<br>coordinate system.&nbsp; (10:19:07 上午&nbsp; 5月 18, 2023)</p></li>
            </ul>
            <div class="scrollbar"><button aria-label="Scroll up"><i class="tri up"></i></button><div class="thumb"></div><button aria-label="Scroll down"><i class="tri"></i></button></div>
          </div>
        </section>
        <section class="panel progress">
          <div class="panel-head"><h2>Progress</h2><button aria-label="Pin progress"><svg><use href="#pin"/></svg></button><button aria-label="Close progress"><svg><use href="#x"/></svg></button></div>
        </section>
      </div>
    </div>

    <section class="dialog measure">
      <header><svg class="ico"><use href="#edt"/></svg><h2>Measure Data</h2><button aria-label="Close measure data"><svg><use href="#x"/></svg></button></header>
      <div class="measure-box">
        <textarea aria-label="Measure results" readonly>Volume(Rectangle1) = 0mm^3
Area(Rectangle1) = 1600mm^2
No. of Lumps = 1
No. of Shells = 1
No. of Faces = 1
No. of Loops = 1
No. of Edges = 4
No. of CoEdges = 4
No. of Vertices = 4</textarea>
        <div class="chevrons"><svg viewBox="0 0 10 10"><path d="M1 7l4-4 4 4"/></svg><svg viewBox="0 0 10 10"><path d="M1 3l4 4 4-4"/></svg></div>
      </div>
      <footer><button class="btn default">Close</button></footer>
      <svg class="grip" viewBox="0 0 12 12"><path d="M0 12L12 0M4 12l8-8M8 12l4-4"/></svg>
    </section>

    <section class="dialog duplicate">
      <header><svg class="ico"><use href="#edt"/></svg><h2>Duplicate Around Axis</h2><button aria-label="Close dialog"><svg><use href="#x"/></svg></button></header>
      <form>
        <div class="field axis-row"><span class="name">Axis:</span><label><input type="radio" name="axis">X</label><label><input type="radio" name="axis">Y</label><label><input type="radio" name="axis" checked>Z</label></div>
        <div class="field angle-row"><label class="name" for="angle">Angle:</label><span class="combo"><input id="angle" type="text" value="30"><button type="button" aria-label="Angle list"><i class="tri"></i></button></span><span class="combo unit"><select aria-label="Angle unit"><option>deg</option></select><span class="drop"><i class="tri"></i></span></span></div>
        <div class="field total-row"><label class="name" for="total">Total number:</label><span class="combo spin"><input id="total" type="text" value="2"><span class="spin-buttons"><button type="button" aria-label="Increase"><i class="tri up"></i></button><button type="button" aria-label="Decrease"><i class="tri"></i></button></span></span></div>
        <div class="field attach-row"><label for="attach">Attach To Original Object:</label><input id="attach" type="checkbox"></div>
        <p class="note">NOTE:&nbsp; When 'Attach to Original Object' is selected,<br>face/edge assignments (e.g. boundaries/excitations)<br>on duplicates will be lost, to ensure model consistency,<br>when 'Total Number' is edited.</p>
        <div class="actions"><button type="button" class="btn default">OK</button><button type="button" class="btn">Cancel</button></div>
      </form>
    </section>

    <div class="netspeed">
      <div class="rates"><p><i class="up">↑</i><b>17</b><em>K/s</em></p><p><i class="down">+</i><b>176</b><em>K/s</em></p></div>
      <div class="load"><svg viewBox="0 0 50 50"><path stroke="#45b8a8" d="M25 4a21 21 0 0 1 18 32"/><path stroke="#c9b84c" d="M43 36a21 21 0 0 1-38-4"/></svg><span>70<small>%</small></span></div>
    </div>
    <p class="watermark">知乎 @缘起</p>
  </main>

  <footer class="statusbar">
    <span class="state">1 object is selected</span>
    <button class="toggle"><svg><use href="#warn"/></svg>Hide 15 Messages</button>
    <button class="toggle"><i class="dash"></i>Hide Progress</button>
    <label for="sx">X:</label><input id="sx" type="text" value="-85">
    <label for="sy">Y:</label><input id="sy" type="text" value="-110">
    <label for="sz">Z:</label><input id="sz" type="text" value="0">
    <span class="sel old abs"><select aria-label="Coordinate mode"><option>Abs</option></select></span>
    <span class="sel old carte"><select aria-label="Coordinate type"><option>Carte</option></select></span>
    <span class="units">mm</span>
  </footer>

  <script src="grid.js"></script>
</body>
</html>
```

FILE: styles.css
```css
* {
  box-sizing: border-box;
}
body {
  margin: 0;
  height: 100vh;
  display: flex;
  flex-direction: column;
  overflow: hidden;
  background: #fff;
  color: #1b1b1b;
  font: 11px/14px Lato, "Noto Sans CJK SC", sans-serif;
}
h1, h2, p, ul {
  margin: 0;
  padding: 0;
  font-size: 11px;
  font-weight: 400;
  list-style: none;
}
a {
  color: inherit;
  text-decoration: none;
}
button, input, select, textarea {
  font: inherit;
  color: inherit;
  margin: 0;
  padding: 0;
  border: 0;
  border-radius: 0;
  background: none;
  outline: none;
}
select {
  appearance: none;
  width: 100%;
  height: 100%;
}
button svg {
  display: block;
}
.defs {
  position: absolute;
  width: 0;
  height: 0;
}
.ico {
  width: 14px;
  height: 14px;
  flex: none;
}
.edt-text {
  font: bold 6px "Liberation Sans", sans-serif;
  fill: #fff;
}

/* title and menu */
.titlebar {
  display: flex;
  align-items: center;
  height: 19px;
  padding-left: 2px;
  gap: 2px;
  color: #8c8c8c;
}
.titlebar h1 {
  flex: 1;
  white-space: nowrap;
}
.titlebar span {
  font-size: 10px;
}
.win-buttons {
  display: flex;
}
.win-buttons button {
  width: 39px;
  height: 18px;
  display: flex;
  align-items: center;
  justify-content: center;
}
.win-buttons svg {
  width: 10px;
  height: 10px;
  fill: none;
  stroke: #8a8a8a;
}
.menubar {
  display: flex;
  align-items: center;
  height: 16px;
  gap: 7px;
  padding-left: 4px;
  color: #555;
}
.mdi-ico {
  width: 13px;
  height: 12px;
  margin-right: -2px;
}
.mdi-buttons {
  display: flex;
  gap: 1px;
  margin-left: auto;
}
.mdi-buttons button {
  width: 15px;
  height: 15px;
  padding: 2px;
  background: #ebebeb;
}
.mdi-buttons svg {
  width: 10px;
  height: 10px;
  fill: none;
  stroke: #777;
}

/* ribbon */
.ribbon {
  display: grid;
  grid-template-columns: 34px 43px 56px 101px 44px 36px 62px 78px 64px 44px 44px 25px 55px 80px 61px 56px 24px 63px 66px 84px 70px 61px 45px 72px 1fr;
  height: 63px;
  padding: 2px 0 3px;
  background: #eeeef1;
  border-top: 1px solid #dcdce0;
  border-bottom: 1px solid #dcdce0;
}
.ribbon > div {
  border-right: 1px solid transparent;
}
.ribbon > .end {
  border-right-color: #d8d8dc;
}
.ribbon > .dark {
  border-right-color: #9a9a9e;
}
.ribbon button {
  display: flex;
  align-items: center;
  gap: 2px;
  height: 17px;
  white-space: nowrap;
}
.ribbon .col {
  display: flex;
  flex-direction: column;
  align-items: flex-start;
  padding-left: 4px;
}
.ribbon .col.off, .ribbon .off {
  color: #989898;
}
.ribbon .row {
  display: flex;
  align-items: center;
  align-self: stretch;
  height: 17px;
  gap: 1px;
  padding-right: 3px;
}
.ribbon .big button {
  flex-direction: column;
  width: 100%;
  height: 56px;
  gap: 4px;
  padding: 1px 0 0 4px;
}
.save-ico {
  width: 24px;
  height: 24px;
}
.zoom-ico {
  width: 26px;
  height: 26px;
}
.icons {
  display: grid;
  grid-auto-rows: 17px;
  justify-content: center;
}
.icons.one {
  grid-template-columns: 19px;
}
.icons.two {
  grid-template-columns: 19px 19px;
}
.icons.three {
  grid-template-columns: 19px 19px 19px;
}
.icons button {
  justify-content: center;
}
.ribbon .pressed {
  background: #cfcfd1;
}
.ribbon .lit {
  background: #fff;
}
.arrow {
  width: 0;
  height: 0;
  margin-left: 2px;
  border: 2px solid transparent;
  border-top: 3px solid #666;
  border-bottom: 0;
}
.arrow.wide {
  margin: 0;
  border-width: 4px 4px 0;
}
.sel {
  position: relative;
  display: block;
  height: 16px;
  background: #fff;
}
.sel.grow {
  flex: 1;
}
.sel::after {
  content: "";
  position: absolute;
  right: 3px;
  top: 6px;
  border: 2px solid transparent;
  border-top: 3px solid #555;
  border-bottom: 0;
  pointer-events: none;
}
.ribbon .col > .sel {
  align-self: stretch;
  margin: 0 3px 1px 0;
  padding-left: 1px;
}

/* tabs */
.tabs {
  display: flex;
  height: 18px;
  padding-left: 2px;
  background: #f0f0f0;
  color: #333;
}
.tabs a {
  padding: 0 7px;
  line-height: 15px;
}
.tabs .active {
  padding: 0 8px;
  background: #f8f8f9;
  border: 1px solid #dedee2;
  border-top: 0;
  color: #1f5f94;
}
.tabs-right {
  display: flex;
  gap: 5px;
  margin-left: auto;
}
.small-ico {
  width: 12px;
  height: 12px;
}

/* docked panels */
.workspace {
  position: relative;
  flex: 1;
  min-height: 0;
  display: flex;
  gap: 3px;
  background: #70737c;
  border-top: 1px solid #888;
}
.side {
  width: 319px;
  flex: none;
  display: flex;
  flex-direction: column;
  gap: 3px;
}
.center {
  flex: 1;
  min-width: 0;
  display: flex;
  flex-direction: column;
  gap: 3px;
}
.panel {
  display: flex;
  flex-direction: column;
  background: #fff;
  min-width: 0;
}
.panel-head {
  display: flex;
  align-items: center;
  gap: 6px;
  height: 18px;
  flex: none;
  padding: 0 4px 0 2px;
  background: linear-gradient(#d6d9de, #c3c7ce);
}
.panel-head h2 {
  flex: 1;
}
.panel-head svg {
  width: 9px;
  height: 9px;
  color: #444;
}
.project {
  flex: 1;
}
.properties {
  height: 362px;
}
.prop-body {
  flex: 1;
  display: flex;
  flex-direction: column;
  margin: 4px 3px 0 4px;
  border: 1px solid #888;
  border-width: 1px 1px 0;
}
table {
  width: 308px;
  height: 158px;
  table-layout: fixed;
  border-collapse: collapse;
}
.c-name { width: 36px; }
.c-value { width: 126px; }
.c-unit { width: 25px; }
.c-eval { width: 49px; }
th, td {
  padding: 0 1px;
  font-weight: 400;
  text-align: left;
  white-space: nowrap;
  border: 1px solid #d0d0d0;
  line-height: 14px;
}
th {
  height: 18px;
  padding: 0;
  text-align: center;
  background: #f0f0f0;
  border-color: #888;
}
td:first-child {
  border-left-color: #888;
}
.mid {
  text-align: center;
}
input[type="checkbox"] {
  appearance: none;
  display: block;
  width: 12px;
  height: 12px;
  background: #fff;
  border: 1px solid #777;
  border-width: 2px 1px 1px 2px;
  border-right-color: #ddd;
  border-bottom-color: #ddd;
}
.mid input[type="checkbox"] {
  margin: 0 auto;
}
input[type="checkbox"]:checked::before {
  content: "";
  display: block;
  width: 3px;
  height: 6px;
  margin: 0 0 0 3px;
  border: solid #000;
  border-width: 0 2px 2px 0;
  transform: rotate(40deg);
}
.swatch {
  display: block;
  width: 120px;
  height: 13px;
  margin: 0 auto;
  background: #8fb08f;
  border: 1px solid #4f6f4f;
}
.trans {
  display: block;
  width: 100%;
  height: 15px;
  background: #f0f0f0;
  border: 1px solid #777;
  border-width: 0 1px 1px 0;
}
.attr-bar {
  margin-top: auto;
  height: 15px;
  border-top: 1px solid #777;
}
.attr-bar button {
  height: 12px;
  padding: 0 4px 0 1px;
  border-right: 1px solid #555;
  border-bottom: 1px solid #555;
  line-height: 11px;
}
.upper {
  flex: 1;
  display: flex;
  min-height: 0;
}
.lower {
  display: flex;
  gap: 3px;
  height: 242px;
}

/* history tree */
.tree {
  width: 221px;
  flex: none;
  background: #fff;
  border-right: 1px solid #666;
  overflow: hidden;
  display: grid;
  grid-auto-rows: 1fr;
  align-content: start;
  padding-bottom: 236px;
}
.tree li {
  display: flex;
  align-items: center;
  margin-left: -2px;
}
.tree svg {
  width: 10px;
  height: 10px;
  margin: 0 1px 0 3px;
}
.tree .hl {
  background: #f0f0f0;
}
.g {
  position: relative;
  width: 15px;
  align-self: stretch;
  background: no-repeat 7px 0 / 1px 100%;
}
.g.v {
  background-image: linear-gradient(#c8c8c8, #c8c8c8);
}
.g.l {
  background-image: linear-gradient(#c8c8c8, #c8c8c8);
  background-size: 1px 50%;
}
.g.b::after, .g.open::after, .g.shut::after {
  content: "";
  position: absolute;
  left: 7px;
  right: 0;
  top: 7px;
  border-top: 1px solid #c8c8c8;
}
.g.open::before, .g.shut::before {
  content: "";
  position: absolute;
  z-index: 1;
  left: 5px;
  top: 5px;
  width: 5px;
  height: 5px;
  border: 1px solid #aaa;
  background: linear-gradient(#777, #777) no-repeat center / 3px 1px #fff;
}
.g.shut::before {
  background: linear-gradient(#444, #444) no-repeat center / 1px 3px, linear-gradient(#444, #444) no-repeat center / 3px 1px #fff;
}

/* 3D view */
.view {
  position: relative;
  flex: 1;
  min-width: 0;
  background: #fff;
  border-left: 1px solid #777;
}
.scene {
  display: block;
  width: 100%;
  height: 100%;
}
.grid-minor { stroke: #e3e3e3; }
.grid-major { stroke: #cecece; }
.grid-far { opacity: 0.2; }
.axis {
  font: 10px "Liberation Sans", sans-serif;
}
.axis.z { fill: #3f4fc0; }
.axis.y { fill: #2a7a4a; }
.hints {
  position: absolute;
  left: 2px;
  bottom: 2px;
  color: #26268a;
  font: 8px/12px "Noto Sans CJK SC", monospace;
  font-feature-settings: "hwid";
}
.hints p {
  font-size: 8px;
}
.scale {
  position: absolute;
  left: 280px;
  bottom: 2px;
  width: 334px;
  font: 7px/10px "Liberation Sans", sans-serif;
}
.scale-bar {
  height: 9px;
  border: 1px solid #222;
  background: linear-gradient(90deg, #fff 50%, #000 50%);
}
.scale-labels {
  display: flex;
  justify-content: space-between;
  margin: 4px -24px 0 -2px;
}

/* messages */
.messages {
  width: 560px;
}
.progress {
  flex: 1;
}
.msg-body {
  flex: 1;
  display: flex;
  justify-content: space-between;
  overflow: hidden;
}
.msg-list {
  display: grid;
  grid-auto-rows: 1fr;
  height: 214px;
  margin: 1px 0 0 28px;
  border-left: 1px solid #e0dede;
  font: 10px/10px "Noto Sans CJK SC", monospace;
  font-feature-settings: "hwid";
}
.msg-list li {
  display: flex;
  align-items: center;
  gap: 3px;
  padding-left: 14px;
}
.msg-list li p {
  font-size: 10px;
  white-space: nowrap;
}
.msg-list svg {
  width: 9px;
  height: 10px;
}
.scrollbar {
  width: 14px;
  display: flex;
  flex-direction: column;
  background: #f8f8f8;
}
.scrollbar button {
  height: 14px;
  display: flex;
  align-items: center;
  justify-content: center;
  border-bottom: 1px solid #888;
}
.scrollbar button:last-child {
  border-bottom: 0;
  border-top: 1px solid #888;
}
.thumb {
  flex: 1;
  margin-top: 82px;
  background: #f0f0f0;
}
.tri {
  width: 0;
  height: 0;
  border: 4px solid transparent;
  border-top-color: #000;
  border-bottom: 0;
}
.tri.up {
  border-top: 0;
  border-bottom: 4px solid #000;
}

/* floating dialogs */
.dialog {
  position: absolute;
  display: flex;
  flex-direction: column;
  background: #f0f0f0;
  border: 1px solid #999;
  box-shadow: 1px 2px 6px rgba(0, 0, 0, 0.35);
}
.dialog header {
  display: flex;
  align-items: center;
  height: 23px;
  gap: 3px;
  padding: 0 9px 0 5px;
  background: #fff;
}
.dialog h2 {
  flex: 1;
}
.dialog header button svg {
  width: 9px;
  height: 9px;
}
.btn {
  width: 64px;
  height: 20px;
  background: #f0f0f0;
  border: 1px solid #777;
  border-top-color: #fff;
  border-left-color: #fff;
}
.btn.default {
  border: 1px solid #555;
  box-shadow: inset -1px -1px #999;
}
.measure {
  left: 5px;
  top: 1px;
  width: 234px;
  height: 289px;
}
.measure header {
  color: #999;
}
.measure-box {
  flex: 1;
  display: flex;
  margin: 10px 9px 0;
  border: 1px solid #888;
  border-right: 0;
  border-bottom-color: #fff;
}
.measure textarea {
  flex: 1;
  padding: 0 3px;
  resize: none;
  overflow: hidden;
  font: 9px/11px "Open Sans", sans-serif;
}
.chevrons {
  width: 16px;
  display: flex;
  flex-direction: column;
  justify-content: space-between;
  align-items: center;
  padding: 4px 0;
  border-left: 1px solid #e6e6e6;
}
.chevrons svg {
  width: 9px;
  height: 9px;
  fill: none;
  stroke: #aaa;
}
.measure footer {
  height: 36px;
  padding: 7px 0 0 89px;
}
.measure footer .btn {
  display: block;
}
.grip {
  position: absolute;
  right: 0;
  bottom: 0;
  width: 12px;
  height: 12px;
  stroke: #888;
}
.duplicate {
  left: 486px;
  top: 67px;
  width: 237px;
  height: 223px;
  font: 9px/11px "Liberation Sans", sans-serif;
}
.duplicate h2 {
  font: 11px/14px Lato, sans-serif;
}
.duplicate form {
  flex: 1;
  display: flex;
  flex-direction: column;
  padding: 0 9px;
  color: #333;
}
.field {
  display: flex;
  align-items: center;
}
.field .name {
  width: 68px;
}
.axis-row {
  height: 20px;
  margin-top: 8px;
}
.axis-row label {
  display: flex;
  align-items: center;
  gap: 4px;
  width: 36px;
}
input[type="radio"] {
  appearance: none;
  width: 9px;
  height: 9px;
  border: 1px solid #888;
  border-right-color: #ddd;
  border-bottom-color: #ddd;
  border-radius: 50%;
  background: #fff;
}
input[type="radio"]:checked {
  background: radial-gradient(#000 2px, #fff 3px);
}
.angle-row {
  height: 22px;
}
.combo {
  display: flex;
  width: 63px;
  height: 16px;
  margin-right: 5px;
  background: #fff;
  border: 1px solid #999;
  border-top-color: #555;
  border-left-color: #555;
}
.combo input, .combo select {
  flex: 1;
  min-width: 0;
  padding-left: 1px;
}
.combo.unit {
  width: 48px;
}
.combo button, .drop {
  display: flex;
  align-items: center;
  justify-content: center;
  width: 14px;
  background: #f0f0f0;
  border: 1px solid #777;
  border-width: 0 1px 1px 0;
}
.total-row {
  height: 20px;
  margin-top: 8px;
  align-items: flex-start;
}
.total-row .name {
  padding-top: 2px;
}
.spin {
  height: 20px;
  border-right: 0;
}
.spin input {
  padding-bottom: 5px;
}
.spin-buttons {
  display: flex;
  flex-direction: column;
}
.spin-buttons button {
  flex: 1;
}
.spin .tri {
  border-width: 0 2px 2px;
}
.spin .tri:not(.up) {
  border-width: 2px 2px 0;
}
.attach-row {
  height: 14px;
  margin-top: 13px;
  gap: 18px;
}
.note {
  margin-top: 9px;
  height: 48px;
  font-size: 9px;
  white-space: nowrap;
  border: 1px solid #ccc;
  border-color: #aaa #ddd #ddd #aaa;
}
.actions {
  display: flex;
  gap: 45px;
  padding: 7px 0 0 20px;
}

/* floating network meter */
.netspeed {
  position: absolute;
  right: 33px;
  top: 526px;
  display: flex;
  align-items: center;
  color: #eee;
}
.rates {
  width: 64px;
  height: 36px;
  margin-right: -13px;
  padding: 0 16px 0 9px;
  border-radius: 18px 0 0 18px;
  background: #33353f;
}
.rates p {
  display: flex;
  align-items: center;
  height: 18px;
  font-size: 9px;
}
.rates i {
  font-style: normal;
  flex: 1;
  font-weight: 700;
}
.rates em {
  font-size: 7px;
  color: #999;
}
.rates .up { color: #3ab0d0; }
.rates .down { color: #3aa860; }
.load {
  position: relative;
  width: 50px;
  height: 50px;
  border-radius: 50%;
  background: #4a4c58;
  box-shadow: 0 0 3px rgba(0, 0, 0, 0.4);
  display: flex;
  align-items: center;
  justify-content: center;
  font: 300 20px/24px Roboto, sans-serif;
}
.load svg {
  position: absolute;
  inset: 0;
  fill: none;
  stroke-width: 2;
}
.load small {
  font-size: 9px;
}
.watermark {
  position: absolute;
  right: 35px;
  bottom: 13px;
  color: #fff;
  font: 44px/56px "Noto Sans CJK SC", sans-serif;
  text-shadow: 2px 2px #b0b0b0;
  white-space: nowrap;
}

/* status bar */
.statusbar {
  display: flex;
  align-items: center;
  height: 19px;
  padding-left: 2px;
  gap: 3px;
  background: #cdd3dc;
  overflow: hidden;
}
.state {
  flex: 1;
}
.toggle {
  display: flex;
  align-items: center;
  gap: 8px;
  height: 17px;
  padding: 0 4px;
  background: #c3e0f8;
  border: 1px solid #5b8fbf;
  font: 10px/12px "Noto Sans CJK SC", monospace;
  font-feature-settings: "hwid";
}
.toggle svg {
  width: 7px;
  height: 8px;
}
.dash {
  width: 6px;
  height: 2px;
  background: #3f9a4f;
}
.statusbar label, .units {
  color: #777;
}
.statusbar label {
  width: 18px;
}
.statusbar input {
  width: 30px;
  height: 17px;
  padding-left: 2px;
  background: #fff;
  border: 1px solid #888;
}
.sel.old {
  height: 17px;
  border: 1px solid #888;
  padding-left: 1px;
}
.sel.old::after {
  right: 2px;
  border-width: 4px 4px 0;
  border-top-color: #000;
}
.abs {
  width: 34px;
}
.carte {
  width: 42px;
}
.units {
  width: 15px;
  overflow: hidden;
}
```

FILE: grid.js
```js
// drawing grid of the XY plane, seen slightly from the side
const layer = document.getElementById('grid-lines');
const NS = 'http://www.w3.org/2000/svg';
const origin = { x: 370, y: 156 };
const stepX = 16.6, stepY = 8.6, lean = -0.078, rise = -0.006;
const bottom = 443;

function addLine(x1, y1, x2, y2, cls) {
  const line = document.createElementNS(NS, 'line');
  line.setAttribute('x1', x1);
  line.setAttribute('y1', y1);
  line.setAttribute('x2', x2);
  line.setAttribute('y2', y2);
  line.setAttribute('class', cls);
  layer.appendChild(line);
}

for (let i = -24; i < 90; i++) {
  const x = origin.x + i * stepX;
  const cls = (i % 5 === 0 ? 'grid-major' : 'grid-minor') + (i < -13 ? ' grid-far' : '');
  addLine(x - origin.y * lean, 0, x + (bottom - origin.y) * lean, bottom, cls);
}

for (let j = -19; j <= 33; j++) {
  const y = origin.y + j * stepY;
  const left = origin.x - 14 * stepX + (y - origin.y) * lean;
  const leftY = y + (left - origin.x) * rise;
  const cls = j % 5 === 0 ? 'grid-major' : 'grid-minor';
  addLine(left, leftY, 2000, y + (2000 - origin.x) * rise, cls);
  addLine(0, y - origin.x * rise, left, leftY, cls + ' grid-far');
}
```
